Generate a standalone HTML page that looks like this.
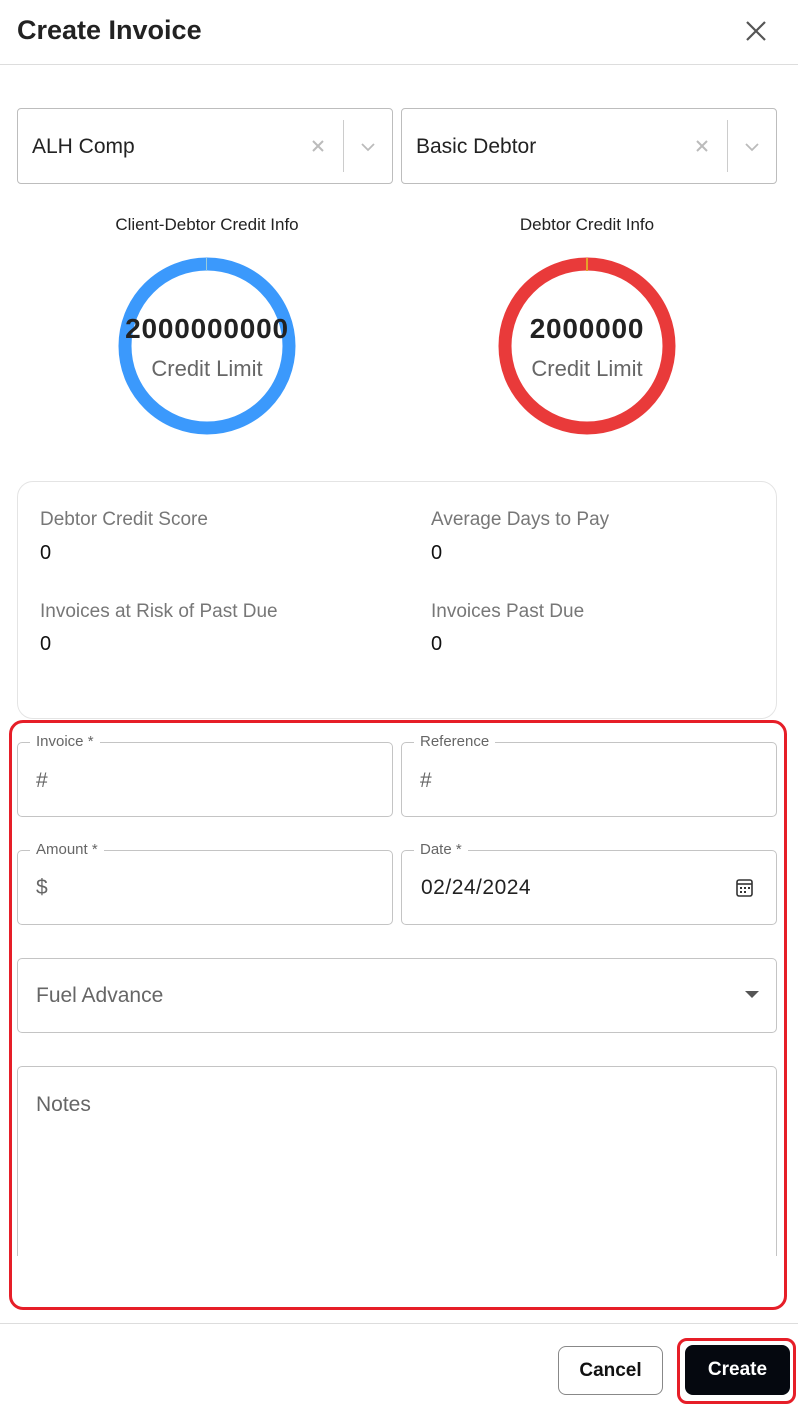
<!DOCTYPE html>
<html><head><style>
*{box-sizing:border-box;margin:0;padding:0}
body{width:798px;height:1409px;background:#fff;font-family:"Liberation Sans",sans-serif;position:relative;overflow:hidden;color:#222}
.a{position:absolute}
.sel{position:absolute;top:108px;height:76px;border:1px solid #bdbdbd;border-radius:4px;font-size:21px;color:#222;padding:26px 0 0 14px}
.fld{position:absolute;border:1px solid #c4c4c4;border-radius:5px}
.lab{position:absolute;top:-10px;left:12px;background:#fff;padding:0 6px;font-size:15px;color:#666}
.ph{position:absolute;font-size:21px;color:#666}
.gl{font-size:19px;color:#777}
.gv{font-size:20px;color:#111}
</style></head><body>
<div class="a" style="left:17px;top:15px;font-size:27px;font-weight:bold;color:#222">Create Invoice</div>
<svg class="a" style="left:745px;top:20px" width="22" height="22"><path d="M2 2L20 20M20 2L2 20" stroke="#555" stroke-width="2.2"/></svg>
<div class="a" style="left:0;top:64px;width:798px;height:1px;background:#ddd"></div>

<div class="sel" style="left:17px;width:376px">ALH Comp</div>
<div class="sel" style="left:401px;width:376px">Basic Debtor</div>
<svg class="a" style="left:311px;top:139px" width="14" height="14"><path d="M2 2L12 12M12 2L2 12" stroke="#bbb" stroke-width="2"/></svg>
<div class="a" style="left:343px;top:120px;width:1px;height:52px;background:#ccc"></div>
<svg class="a" style="left:360px;top:142px" width="16" height="10"><path d="M2 2L8 8L14 2" stroke="#bbb" stroke-width="1.8" fill="none"/></svg>
<svg class="a" style="left:695px;top:139px" width="14" height="14"><path d="M2 2L12 12M12 2L2 12" stroke="#bbb" stroke-width="2"/></svg>
<div class="a" style="left:727px;top:120px;width:1px;height:52px;background:#ccc"></div>
<svg class="a" style="left:744px;top:142px" width="16" height="10"><path d="M2 2L8 8L14 2" stroke="#bbb" stroke-width="1.8" fill="none"/></svg>

<div class="a" style="left:0;width:414px;top:215px;text-align:center;font-size:17px;color:#222">Client-Debtor Credit Info</div>
<div class="a" style="left:380px;width:414px;top:215px;text-align:center;font-size:17px;color:#222">Debtor Credit Info</div>
<svg class="a" style="left:0;top:250px" width="798" height="200">
<circle cx="207" cy="96" r="82" fill="none" stroke="#3b99fc" stroke-width="13"/>
<circle cx="587" cy="96" r="82" fill="none" stroke="#e93a3a" stroke-width="13"/>
<rect x="586" y="8" width="2" height="13" fill="#e6a12a"/>
<rect x="206" y="8" width="1" height="13" fill="#9cd"/>
</svg>
<div class="a" style="left:0;width:414px;top:313px;text-align:center;font-size:28px;font-weight:bold;color:#222;letter-spacing:0.8px">2000000000</div>
<div class="a" style="left:380px;width:414px;top:313px;text-align:center;font-size:28px;font-weight:bold;color:#222;letter-spacing:0.8px">2000000</div>
<div class="a" style="left:0;width:414px;top:356px;text-align:center;font-size:22px;color:#666">Credit Limit</div>
<div class="a" style="left:380px;width:414px;top:356px;text-align:center;font-size:22px;color:#666">Credit Limit</div>

<div class="a" style="left:17px;top:481px;width:760px;height:238px;border:1px solid #e4e4e4;border-radius:16px"></div>
<div class="a gl" style="left:40px;top:509px">Debtor Credit Score</div>
<div class="a gv" style="left:40px;top:542px">0</div>
<div class="a gl" style="left:431px;top:509px">Average Days to Pay</div>
<div class="a gv" style="left:431px;top:542px">0</div>
<div class="a gl" style="left:40px;top:601px">Invoices at Risk of Past Due</div>
<div class="a gv" style="left:40px;top:633px">0</div>
<div class="a gl" style="left:431px;top:601px">Invoices Past Due</div>
<div class="a gv" style="left:431px;top:633px">0</div>

<div class="fld" style="left:17px;top:742px;width:376px;height:75px"><span class="lab">Invoice *</span><span class="ph" style="left:18px;top:26px">#</span></div>
<div class="fld" style="left:401px;top:742px;width:376px;height:75px"><span class="lab">Reference</span><span class="ph" style="left:18px;top:26px">#</span></div>
<div class="fld" style="left:17px;top:850px;width:376px;height:75px"><span class="lab">Amount *</span><span class="ph" style="left:18px;top:25px">$</span></div>
<div class="fld" style="left:401px;top:850px;width:376px;height:75px"><span class="lab">Date *</span><span class="ph" style="left:19px;top:25px;color:#222;letter-spacing:0.5px">02/24/2024</span>
<svg class="a" style="left:333px;top:27px" width="20" height="20"><rect x="2" y="2" width="15" height="16" rx="2" fill="none" stroke="#333" stroke-width="1.6"/><line x1="2" y1="6" x2="17" y2="6" stroke="#333" stroke-width="1.6"/><g fill="#333"><rect x="5" y="9" width="2" height="2"/><rect x="9" y="9" width="2" height="2"/><rect x="13" y="9" width="2" height="2"/><rect x="5" y="13" width="2" height="2"/><rect x="9" y="13" width="2" height="2"/></g></svg></div>
<div class="fld" style="left:17px;top:958px;width:760px;height:75px"><span class="ph" style="left:18px;top:25px">Fuel Advance</span>
<svg class="a" style="left:727px;top:32px" width="14" height="8"><path d="M0 0L14 0L7 7Z" fill="#555"/></svg></div>
<div class="a" style="left:17px;top:1066px;width:760px;height:190px;border:1px solid #c4c4c4;border-bottom:none;border-radius:5px 5px 0 0"><span class="ph" style="left:18px;top:26px">Notes</span></div>

<div class="a" style="left:9px;top:720px;width:778px;height:590px;border:3px solid #e61e28;border-radius:14px"></div>

<div class="a" style="left:0;top:1323px;width:798px;height:1px;background:#ddd"></div>
<div class="a" style="left:558px;top:1346px;width:105px;height:49px;border:1px solid #888;border-radius:8px;text-align:center;line-height:47px;font-size:19px;font-weight:bold;color:#111">Cancel</div>
<div class="a" style="left:677px;top:1338px;width:119px;height:66px;border:3px solid #e61e28;border-radius:10px"></div>
<div class="a" style="left:685px;top:1345px;width:105px;height:50px;background:#05080f;border-radius:8px;text-align:center;line-height:50px;font-size:19px;font-weight:bold;color:#fff">Create</div>
</body></html>
